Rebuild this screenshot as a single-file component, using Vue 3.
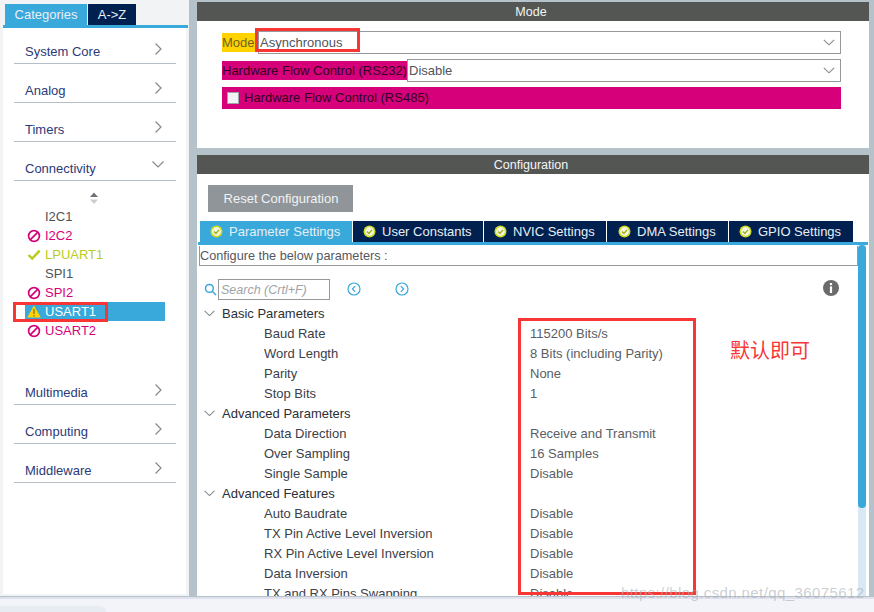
<script setup>
const cats = [
  { n: 'System Core', open: false },
  { n: 'Analog', open: false },
  { n: 'Timers', open: false },
  { n: 'Connectivity', open: true }
]
const cats2 = ['Multimedia', 'Computing', 'Middleware']
const items = [
  { n: 'I2C1', c: 'plain', i: '' },
  { n: 'I2C2', c: 'pink', i: 'no' },
  { n: 'LPUART1', c: 'lime', i: 'ok' },
  { n: 'SPI1', c: 'plain', i: '' },
  { n: 'SPI2', c: 'pink', i: 'no' },
  { n: 'USART1', c: 'sel', i: 'warn' },
  { n: 'USART2', c: 'pink', i: 'no' }
]
const tabs = ['Parameter Settings', 'User Constants', 'NVIC Settings', 'DMA Settings', 'GPIO Settings']
const groups = [
  { t: 'Basic Parameters', r: [['Baud Rate', '115200 Bits/s'], ['Word Length', '8 Bits (including Parity)'], ['Parity', 'None'], ['Stop Bits', '1']] },
  { t: 'Advanced Parameters', r: [['Data Direction', 'Receive and Transmit'], ['Over Sampling', '16 Samples'], ['Single Sample', 'Disable']] },
  { t: 'Advanced Features', r: [['Auto Baudrate', 'Disable'], ['TX Pin Active Level Inversion', 'Disable'], ['RX Pin Active Level Inversion', 'Disable'], ['Data Inversion', 'Disable'], ['TX and RX Pins Swapping', 'Disable']] }
]
</script>

<template>
  <div class="app">
    <div class="main">
      <aside class="side">
        <div class="stabs">
          <div class="stab on">Categories</div>
          <div class="stab">A-&gt;Z</div>
        </div>
        <div class="sline"></div>
        <div class="slist">
          <div v-for="c in cats" :key="c.n" class="cat">
            <span>{{ c.n }}</span>
            <svg width="14" height="14" viewBox="0 0 14 14" class="chev">
              <path v-if="c.open" d="M1.5 2.5 L7 8 L12.5 2.5" />
              <path v-else d="M4.5 1.5 L10 7 L4.5 12.5" />
            </svg>
          </div>
          <div class="updown">
            <svg width="10" height="13" viewBox="0 0 10 13">
              <path d="M5 0.5 L9 5 H1 Z" fill="#6d7277" />
              <path d="M1 7.5 H9 L5 12 Z" fill="#c9cdd0" />
            </svg>
          </div>
          <div class="items">
            <div v-for="it in items" :key="it.n" class="item" :class="it.c">
              <span class="ico">
                <svg v-if="it.i === 'no'" width="14" height="14" viewBox="0 0 14 14" fill="none" stroke="#d5007a" stroke-width="1.7">
                  <circle cx="7" cy="7" r="5.4" /><path d="M3.2 10.8 L10.8 3.2" />
                </svg>
                <svg v-else-if="it.i === 'ok'" width="14" height="12" viewBox="0 0 14 12" fill="none" stroke="#b5cc18" stroke-width="2.4">
                  <path d="M1.5 6 L5.2 9.6 L12.6 1.6" />
                </svg>
                <svg v-else-if="it.i === 'warn'" width="14" height="13" viewBox="0 0 14 13">
                  <path d="M7 0.5 L13.8 12.5 H0.2 Z" fill="#ffd200" />
                  <path d="M6.3 4 H7.7 V9 H6.3 Z M6.3 10 H7.7 V11.4 H6.3 Z" fill="#8a7a20" />
                </svg>
              </span>
              <span>{{ it.n }}</span>
            </div>
          </div>
          <div class="cats2">
            <div v-for="c in cats2" :key="c" class="cat">
              <span>{{ c }}</span>
              <svg width="14" height="14" viewBox="0 0 14 14" class="chev"><path d="M4.5 1.5 L10 7 L4.5 12.5" /></svg>
            </div>
          </div>
        </div>
      </aside>

      <section class="right">
        <div class="panel mode">
          <div class="head">Mode</div>
          <div class="mbody">
            <div class="mrow">
              <label class="lab yellow">Mode</label>
              <div class="sel first"><span>Asynchronous</span>
                <svg width="12" height="7" viewBox="0 0 12 7" class="dd"><path d="M0.8 0.8 L6 5.8 L11.2 0.8" /></svg>
              </div>
            </div>
            <div class="mrow">
              <label class="lab magenta">Hardware Flow Control (RS232)</label>
              <div class="sel"><span>Disable</span>
                <svg width="12" height="7" viewBox="0 0 12 7" class="dd"><path d="M0.8 0.8 L6 5.8 L11.2 0.8" /></svg>
              </div>
            </div>
            <div class="checkrow"><span class="box"></span>Hardware Flow Control (RS485)</div>
          </div>
        </div>

        <div class="panel config">
          <div class="head">Configuration</div>
          <button class="reset">Reset Configuration</button>
          <div class="ptabs">
            <div v-for="(t, i) in tabs" :key="t" class="ptab" :class="{ on: i === 0 }">
              <svg width="13" height="13" viewBox="0 0 13 13">
                <circle cx="6.5" cy="6.5" r="6" fill="#cddc20" />
                <circle cx="6.5" cy="6.5" r="4.4" fill="#f4f6e0" />
                <path d="M4 6.6 L5.9 8.4 L9 4.9" fill="none" stroke="#9fae10" stroke-width="1.4" />
              </svg>
              <span>{{ t }}</span>
            </div>
          </div>
          <div class="pline"></div>
          <div class="pscroll">
            <div class="pcontent">
              <div class="desc">Configure the below parameters :</div>
              <div class="searchrow">
                <svg width="13" height="13" viewBox="0 0 13 13" fill="none" stroke="#38a7dc" stroke-width="1.5">
                  <circle cx="5.4" cy="5.4" r="3.9" /><path d="M8.3 8.3 L12 12" />
                </svg>
                <div class="search">Search (Crtl+F)</div>
                <svg class="nav" width="14" height="14" viewBox="0 0 14 14" fill="none" stroke="#38a7dc" stroke-width="1.2">
                  <circle cx="7" cy="7" r="6" /><path d="M8.2 4.2 L5.4 7 L8.2 9.8" />
                </svg>
                <svg class="nav2" width="14" height="14" viewBox="0 0 14 14" fill="none" stroke="#38a7dc" stroke-width="1.2">
                  <circle cx="7" cy="7" r="6" /><path d="M5.8 4.2 L8.6 7 L5.8 9.8" />
                </svg>
                <svg class="info" width="16" height="16" viewBox="0 0 16 16">
                  <circle cx="8" cy="8" r="8" fill="#6b6b6b" />
                  <rect x="6.9" y="3" width="2.2" height="2.2" fill="#fff" />
                  <rect x="6.9" y="6.4" width="2.2" height="6.6" fill="#fff" />
                </svg>
              </div>
              <div class="tree">
                <template v-for="g in groups" :key="g.t">
                  <div class="grp">
                    <svg width="11" height="7" viewBox="0 0 11 7" class="gchev"><path d="M0.6 0.8 L5.5 5.6 L10.4 0.8" /></svg>
                    <span>{{ g.t }}</span>
                  </div>
                  <div v-for="r in g.r" :key="r[0]" class="row">
                    <span class="k">{{ r[0] }}</span>
                    <span class="v">{{ r[1] }}</span>
                  </div>
                </template>
              </div>
            </div>
            <div class="sbar"><div class="thumb"></div></div>
          </div>
        </div>
      </section>
    </div>
    <div class="foot"><div class="foottab"></div></div>

    <div class="mark m1"></div>
    <div class="mark m2"></div>
    <div class="mark m3"></div>
    <div class="note">默认即可</div>
    <div class="wm">https://blog.csdn.net/qq_36075612</div>
  </div>
</template>

<style>
html, body { margin: 0; background: #fff; }
</style>

<style scoped>
.app {
  position: relative;
  width: 874px;
  height: 612px;
  overflow: hidden;
  background: #b6c2c9;
  font-family: "Liberation Sans", Arial, sans-serif;
  font-size: 13px;
  color: #4a4f57;
  display: flex;
  flex-direction: column;
}
.main { flex: none; height: 596px; display: flex; }

/* sidebar */
.side {
  width: 189px;
  flex: none;
  box-sizing: border-box;
  background: #f1f3f4;
  padding: 4px 1px 2px 3px;
  display: flex;
  flex-direction: column;
}
.stabs { display: flex; gap: 1px; height: 21px; padding-left: 2px; flex: none; }
.stab {
  background: #00204f;
  color: #e8eef4;
  width: 48px;
  text-align: center;
  line-height: 21px;
  font-size: 13px;
}
.stab.on { background: #39a9db; width: 82px; }
.sline { flex: none; height: 3px; background: #39a9db; }
.slist {
  flex: 1;
  margin-right: 2px;
  background: #fff;
  padding: 0 0 0 11px;
  box-sizing: border-box;
}
.cat {
  height: 39px;
  box-sizing: border-box;
  border-bottom: 1px solid #b4bec4;
  display: flex;
  align-items: flex-end;
  justify-content: space-between;
  width: 162px;
  padding: 0 12px 0 11px;
  color: #2b3a78;
  font-size: 13px;
  line-height: 22px;
}
.slist > .cat:first-child { height: 36px; }
.chev { fill: none; stroke: #85898c; stroke-width: 1.2; margin-bottom: 7px; margin-right: -1px; }
.updown { height: 13px; margin-top: 11px; padding-left: 75px; }
.updown svg { display: block; }
.items { margin: 2px 0 0 11px; width: 140px; }
.item {
  height: 19px;
  display: flex;
  align-items: center;
  gap: 4px;
  padding-left: 2px;
  font-size: 13px;
  line-height: 19px;
}
.ico { width: 14px; display: flex; justify-content: center; }
.plain { color: #4f5359; }
.pink { color: #d5007a; }
.lime { color: #b9cc22; }
.item.sel { color: #fff; background: #39a9db; }
.cats2 { margin-top: 26px; }

/* right */
.right {
  flex: 1;
  min-width: 0;
  box-sizing: border-box;
  padding: 2px 5px 0 8px;
  display: flex;
  flex-direction: column;
  gap: 7px;
}
.panel { background: #fff; }
.head {
  height: 19px;
  background: #545654;
  color: #f5f5f5;
  text-align: center;
  line-height: 20px;
  font-size: 12.5px;
  padding-right: 4px;
}
.mode { height: 146px; flex: none; }
.mbody { padding: 10px 28px 0 25px; }
.mrow { display: flex; height: 23px; margin-bottom: 5px; align-items: center; }
.lab { height: 19px; line-height: 19px; font-size: 13px; white-space: nowrap; }
.yellow { background: #ffd200; width: 33px; color: #6f6320; flex: none; }
.magenta { background: #d5007a; width: 185px; color: #30001e; flex: none; }
.mrow .sel {
  flex: 1;
  height: 23px;
  box-sizing: border-box;
  border: 1px solid #96999c;
  background: #fff;
  display: flex;
  align-items: center;
  justify-content: space-between;
  padding: 0 5px 0 1px;
  font-size: 13px;
  color: #50535a;
}
.mrow .sel.first { margin-left: 3px; }
.dd { fill: none; stroke: #85898c; stroke-width: 1.1; }
.checkrow {
  height: 22px;
  background: #d5007a;
  display: flex;
  align-items: center;
  padding: 0 0 1px 5px;
  box-sizing: border-box;
  gap: 5px;
  color: #30001e;
  font-size: 13px;
}
.box { flex: none; width: 10px; height: 10px; background: #f1f3f5; border: 1px solid #a0a4a8; }

.config { flex: 1; min-height: 0; display: flex; flex-direction: column; }
.reset {
  flex: none;
  align-self: flex-start;
  margin: 11px 0 0 11px;
  width: 145px;
  height: 27px;
  border: 0;
  background: #90959a;
  color: #f2f3f4;
  font: 13px "Liberation Sans", Arial, sans-serif;
  padding: 0 0 0 1px;
}
.ptabs { flex: none; display: flex; gap: 1px; margin: 9px 0 0 3px; height: 21px; }
.ptab {
  background: #00204f;
  color: #e8eef4;
  display: flex;
  align-items: center;
  gap: 6px;
  padding-left: 10px;
  box-sizing: border-box;
  font-size: 13px;
  white-space: nowrap;
}
.ptab:nth-child(1) { width: 152px; background: #39a9db; }
.ptab:nth-child(2) { width: 130px; }
.ptab:nth-child(3) { width: 122px; }
.ptab:nth-child(4) { width: 121px; padding-left: 11px; }
.ptab:nth-child(5) { width: 124px; }
.pline { flex: none; height: 3px; background: #39a9db; margin: 0 1px 0 1px; }
.pscroll { flex: 1; min-height: 0; display: flex; overflow: hidden; background: #fff; }
.pcontent { flex: 1; min-width: 0; overflow: hidden; padding-top: 1px; }
.desc {
  height: 20px;
  box-sizing: border-box;
  margin-left: 2px;
  border: 1px solid #96999c;
  border-top: 0;
  line-height: 20px;
  font-size: 12.7px;
  color: #55585f;
}
.searchrow { position: relative; display: flex; align-items: center; height: 22px; margin-top: 12px; padding-left: 7px; }
.search {
  width: 112px;
  height: 21px;
  box-sizing: border-box;
  border: 1px solid #96999c;
  margin-left: 1px;
  line-height: 20px;
  padding-left: 2px;
  font-size: 12.5px;
  font-style: italic;
  color: #a0a3a6;
}
.nav { margin-left: 17px; }
.nav2 { margin-left: 34px; }
.info { position: absolute; left: 626px; top: 2px; }
.tree { margin-top: 3px; }
.grp { height: 20px; display: flex; align-items: center; color: #2b2f36; padding-left: 7px; gap: 7px; font-size: 13px; }
.gchev { fill: none; stroke: #85898c; stroke-width: 1.1; }
.row { height: 20px; display: flex; align-items: center; font-size: 13px; }
.k { width: 266px; margin-left: 67px; flex: none; color: #3c4048; white-space: nowrap; }
.v { color: #5a5d64; white-space: nowrap; }
.sbar { flex: none; width: 8px; background: #d8e8f4; margin-right: 3px; }
.thumb { height: 263px; background: #39a9db; border-radius: 4px; }

.foot { flex: 1; position: relative; background: #f3f4fa; border-top: 1px solid #b6c2c9; box-shadow: inset 0 2px 0 #dfe2ee, inset 0 1px 0 #fff; }
.foottab { position: absolute; left: 0; top: 9px; width: 107px; height: 8px; background: #e6ecf2; border-radius: 0 8px 0 0; }

.mark { position: absolute; border: 3px solid #f93636; box-sizing: border-box; }
.m1 { left: 255px; top: 28px; width: 105px; height: 24px; }
.m2 { left: 13px; top: 302px; width: 95px; height: 20px; }
.m3 { left: 518px; top: 318px; width: 178px; height: 277px; }
.note { position: absolute; left: 730px; top: 338px; font: 20px "Noto Sans CJK SC", sans-serif; line-height: 24px; color: #f93636; }
.wm { position: absolute; left: 621px; top: 584px; font-size: 15px; letter-spacing: 0.4px; color: rgba(170, 175, 180, 0.6); white-space: nowrap; }
</style>
